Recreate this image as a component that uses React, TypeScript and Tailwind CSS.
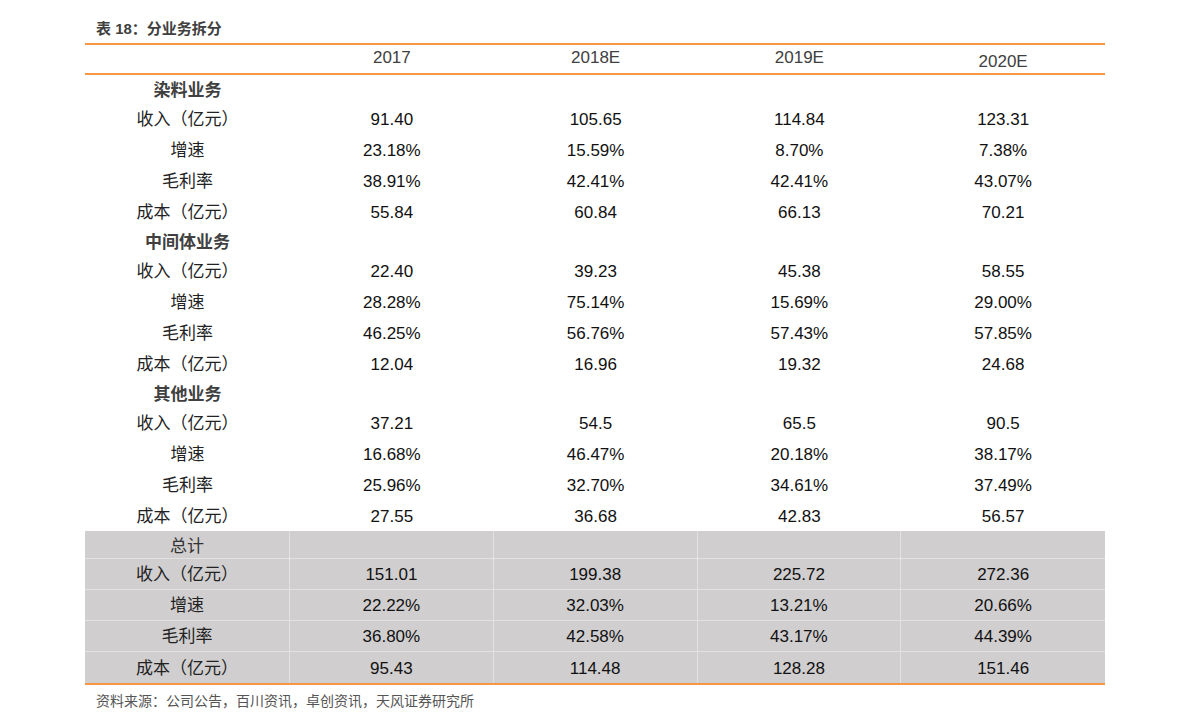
import React from 'react';

type Row = { label: string; values: string[] };
type Section = { title: string; rows: Row[]; shaded?: boolean };

const years = ['2017', '2018E', '2019E', '2020E'];

const sections: Section[] = [
  {
    title: '染料业务',
    rows: [
      { label: '收入（亿元）', values: ['91.40', '105.65', '114.84', '123.31'] },
      { label: '增速', values: ['23.18%', '15.59%', '8.70%', '7.38%'] },
      { label: '毛利率', values: ['38.91%', '42.41%', '42.41%', '43.07%'] },
      { label: '成本（亿元）', values: ['55.84', '60.84', '66.13', '70.21'] },
    ],
  },
  {
    title: '中间体业务',
    rows: [
      { label: '收入（亿元）', values: ['22.40', '39.23', '45.38', '58.55'] },
      { label: '增速', values: ['28.28%', '75.14%', '15.69%', '29.00%'] },
      { label: '毛利率', values: ['46.25%', '56.76%', '57.43%', '57.85%'] },
      { label: '成本（亿元）', values: ['12.04', '16.96', '19.32', '24.68'] },
    ],
  },
  {
    title: '其他业务',
    rows: [
      { label: '收入（亿元）', values: ['37.21', '54.5', '65.5', '90.5'] },
      { label: '增速', values: ['16.68%', '46.47%', '20.18%', '38.17%'] },
      { label: '毛利率', values: ['25.96%', '32.70%', '34.61%', '37.49%'] },
      { label: '成本（亿元）', values: ['27.55', '36.68', '42.83', '56.57'] },
    ],
  },
  {
    title: '总计',
    shaded: true,
    rows: [
      { label: '收入（亿元）', values: ['151.01', '199.38', '225.72', '272.36'] },
      { label: '增速', values: ['22.22%', '32.03%', '13.21%', '20.66%'] },
      { label: '毛利率', values: ['36.80%', '42.58%', '43.17%', '44.39%'] },
      { label: '成本（亿元）', values: ['95.43', '114.48', '128.28', '151.46'] },
    ],
  },
];

const grid = 'grid grid-cols-[205px_1fr_1fr_1fr_1fr]';
const cjk = '[text-spacing-trim:space-all]';

function SectionBlock({ section }: { section: Section }) {
  const shaded = section.shaded;
  const cell = shaded ? 'border-r border-white/40 last:border-r-0' : '';
  return (
    <div className={shaded ? 'bg-[#d0cecf]' : ''}>
      <div className={`${grid} h-[28px] items-center ${shaded ? 'border-b border-white/40' : ''}`}>
        <div
          className={`h-full flex items-center justify-center pt-[3px] ${cjk} ${
            shaded ? 'font-normal text-[#333333]' : 'font-bold text-[#404040]'
          } ${cell}`}
        >
          {section.title}
        </div>
        {years.map((y) => (
          <div key={y} className={`h-full ${cell}`} />
        ))}
      </div>
      {section.rows.map((r, i) => (
        <div
          key={i}
          className={`${grid} h-[31px] items-center ${
            shaded && i < section.rows.length - 1 ? 'border-b border-white/40' : ''
          }`}
        >
          <div className={`h-full flex items-center justify-center pt-[2px] text-[#222222] ${cjk} ${cell}`}>
            {r.label}
          </div>
          {r.values.map((v, j) => (
            <div key={j} className={`h-full flex items-center justify-center pt-[2px] text-[#111111] ${cell}`}>
              {v}
            </div>
          ))}
        </div>
      ))}
    </div>
  );
}

export default function App() {
  return (
    <div className="w-[1191px] h-[728px] bg-white font-['Liberation_Sans','Noto_Sans_CJK_SC',sans-serif] relative">
      <div className={`pl-[96px] pt-[18px] text-[15px] font-bold text-[#404040] leading-[22px] ${cjk}`}>
        表 18：分业务拆分
      </div>
      <div className="ml-[85px] w-[1020px] mt-[3px] text-[17px]">
        <div className="border-t-2 border-b-2 border-[#f79646]">
          <div className={`${grid} h-[28px] items-center text-[#404040]`}>
            <div />
            <div className="text-center pb-[4px]">2017</div>
            <div className="text-center pb-[4px]">2018E</div>
            <div className="text-center pb-[4px]">2019E</div>
            <div className="text-center pt-[3px]">2020E</div>
          </div>
        </div>
        {sections.map((s) => (
          <SectionBlock key={s.title} section={s} />
        ))}
        <div className="border-t-2 border-[#f79646]" />
      </div>
      <div className={`pl-[96px] pt-[6px] text-[14px] text-[#555555] leading-[20px] ${cjk}`}>
        资料来源：公司公告，百川资讯，卓创资讯，天风证券研究所
      </div>
    </div>
  );
}
